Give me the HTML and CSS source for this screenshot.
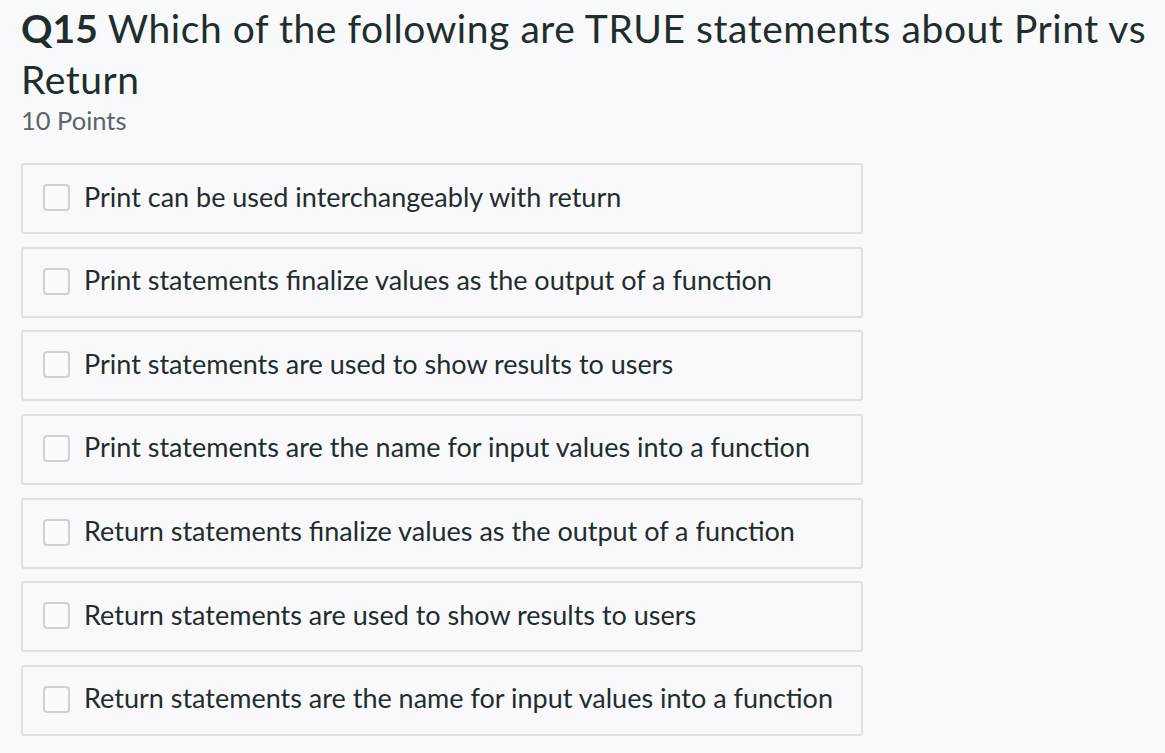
FILE: index.html
```html
<!DOCTYPE html>
<html lang="en">
<head>
<meta charset="utf-8">
<title>Q15</title>
<link rel="stylesheet" href="styles.css">
</head>
<body>
<main class="question">
  <h1 class="q-title"><span class="q-num">Q15</span> Which of the following are TRUE statements about Print vs Return</h1>
  <div class="q-points">10 Points</div>
  <ul class="options">
    <li class="option"><span class="check"></span><span class="label">Print can be used interchangeably with return</span></li>
    <li class="option"><span class="check"></span><span class="label">Print statements finalize values as the output of a function</span></li>
    <li class="option"><span class="check"></span><span class="label">Print statements are used to show results to users</span></li>
    <li class="option"><span class="check"></span><span class="label">Print statements are the name for input values into a function</span></li>
    <li class="option"><span class="check"></span><span class="label">Return statements finalize values as the output of a function</span></li>
    <li class="option"><span class="check"></span><span class="label">Return statements are used to show results to users</span></li>
    <li class="option"><span class="check"></span><span class="label">Return statements are the name for input values into a function</span></li>
  </ul>
</main>
</body>
</html>
```

FILE: styles.css
```css
html, body {
  margin: 0;
  padding: 0;
  background: #f8f9fa;
}
body {
  font-family: Lato, "Noto Sans", sans-serif;
  color: #1f2d2d;
}
.question {
  padding: 3px 0 0 21px;
}
.q-title {
  margin: 0;
  font-size: 39px;
  line-height: 51px;
  font-weight: 400;
  letter-spacing: 0.55px;
  width: 1144px;
}
.q-num {
  font-weight: 700;
  letter-spacing: 0;
}
.q-points {
  font-size: 25.5px;
  line-height: 30px;
  color: #5b6466;
}
.options {
  list-style: none;
  margin: 28px 0 0 0;
  padding: 0;
  width: 842px;
}
.option {
  box-sizing: border-box;
  height: 71px;
  margin-bottom: 12.67px;
  border: 2px solid #dde0e4;
  border-radius: 3px;
  background: #f9f9fb;
  display: flex;
  align-items: center;
  padding-left: 20px;
  padding-bottom: 2px;
}
.check {
  box-sizing: border-box;
  width: 27px;
  height: 27px;
  border: 2px solid #cdd1d6;
  border-radius: 4px;
  background: #fbfbfc;
  flex: none;
}
.label {
  margin-left: 14px;
  font-size: 27px;
  line-height: 32px;
  padding-bottom: 2px;
  letter-spacing: 0;
}
```
